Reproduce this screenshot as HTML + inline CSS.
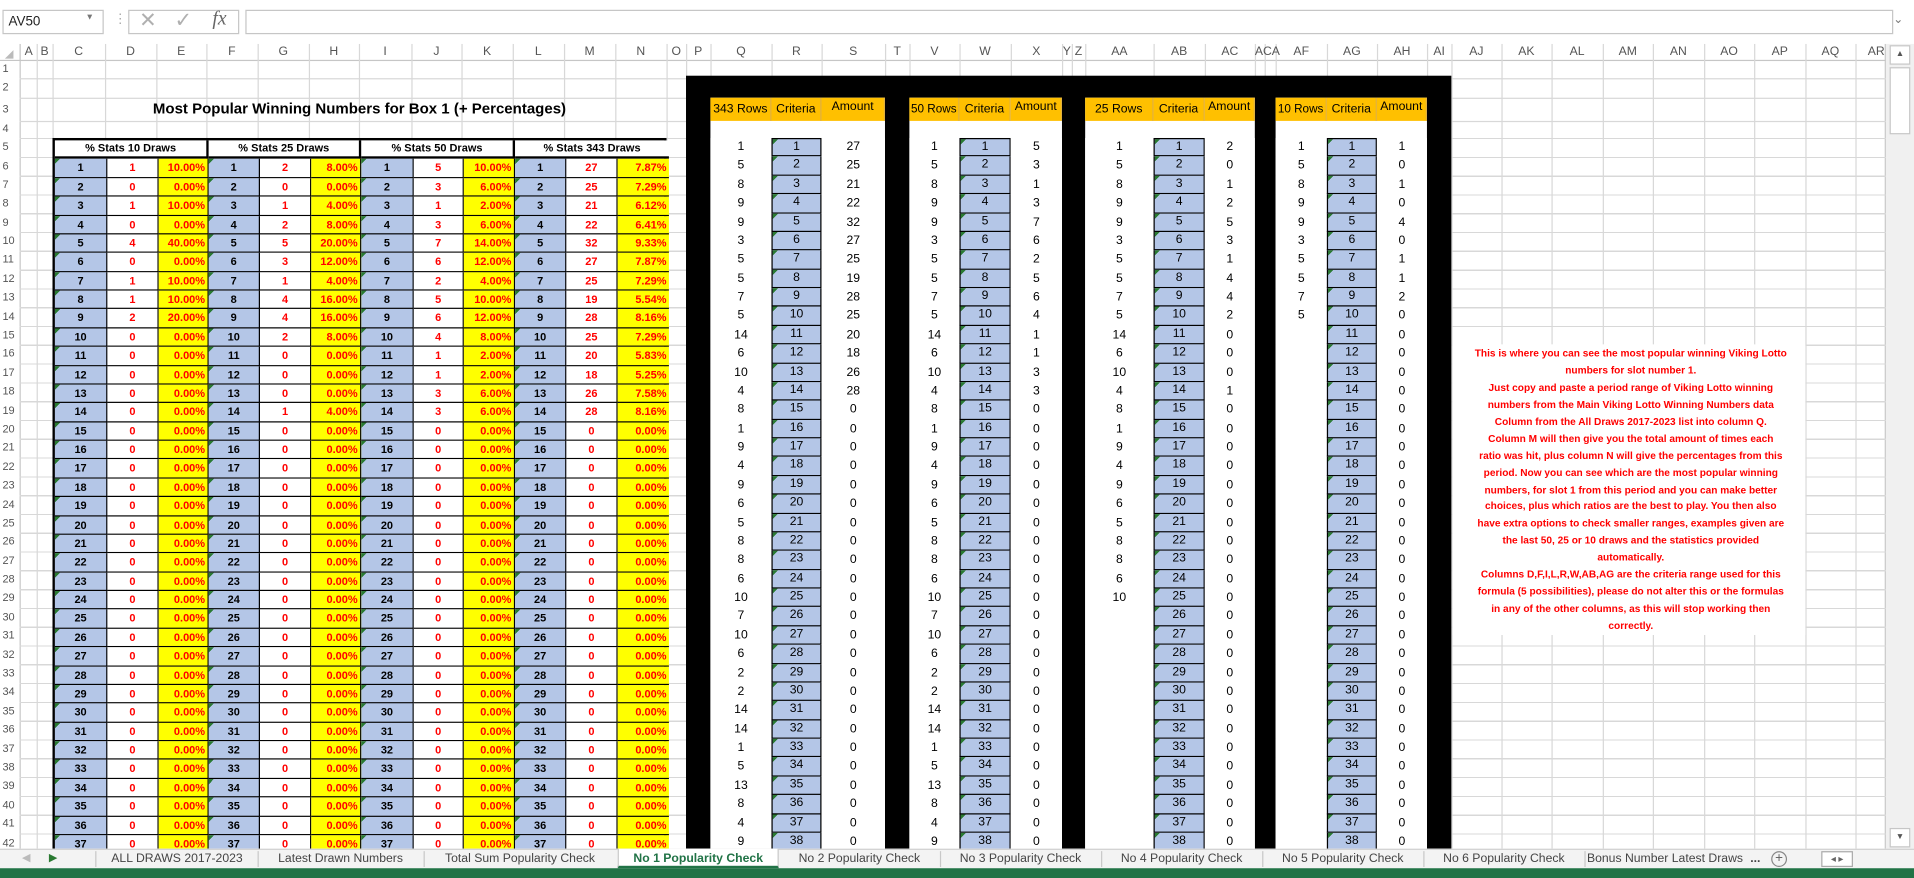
<!DOCTYPE html>
<html><head><meta charset="utf-8"><style>
*{margin:0;padding:0;box-sizing:border-box}
html,body{width:1914px;height:878px;overflow:hidden;background:#fff}
#w{position:absolute;left:0;top:0;width:1568px;height:719px;transform:scale(1.22066,1.22114);transform-origin:0 0;font-family:"Liberation Sans",Arial,sans-serif;background:#fff}
.a{position:absolute}
.vl{position:absolute;top:36px;height:659px;width:1px;background:#d8d8d8}
.ch{position:absolute;top:36px;height:14px;font-size:10px;color:#555;text-align:center;line-height:14px}
.rh{position:absolute;left:0;width:14px;font-size:9px;color:#555;text-align:left;padding-left:2px}
table{display:block;position:absolute}
tbody{display:grid;grid-auto-rows:15.39px}
tr{display:contents}
td{display:block;overflow:hidden;white-space:nowrap;text-align:center}
#lt{left:43px;top:113.1px;font-size:9px;font-weight:bold}
#lt tbody{grid-template-columns:43px 42px 41px 42px 42px 41px 43px 41px 42px 42px 42px 42px;border-left:2px solid #000;border-right:2px solid #000;border-top:2px solid #000;width:503px;margin-left:0}
#lt td{border-right:1px solid #000;border-bottom:1px solid #000;line-height:14px}
#lt td:nth-child(3n+1){background:#b4c6e7 linear-gradient(135deg,#2a7a32 3px,transparent 3px);color:#000}
#lt td:nth-child(3n+2){color:#f00;background:#fff}
#lt td:nth-child(3n){background:#ff0;color:#f00;text-align:right;padding-right:2px}
#lt td:nth-child(12){border-right:none}
#lt tr.h td{background:#fff;color:#000;text-align:center;grid-column:span 3;border-bottom:2px solid #000;border-right:2px solid #000;line-height:12px;padding:0}
#lt tr.h td:last-child{border-right:none}
.rt{top:113.1px;font-size:10px}
.rt td{line-height:15px;background:#fff}
.rt td:nth-child(2){background:#b4c6e7 linear-gradient(135deg,#2a7a32 3px,transparent 3px);border:1px solid #000;border-top:none;line-height:14px}
.rt tr:first-child td:nth-child(2){border-top:1px solid #000}
.oh{position:absolute;top:79.5px;height:19.5px;background:#ffc000;font-size:10px;line-height:19px;text-align:center;white-space:nowrap;border-right:1px solid #e0b040}
.tab{position:absolute;top:696px;height:15px;font-size:10px;color:#444;line-height:15px;white-space:nowrap;transform:translateX(-50%)}
.sep{position:absolute;top:697px;height:13px;width:1px;background:#c8c8c8}
</style></head><body><div id="w">
<div class="a" style="left:0;top:0;width:1568px;height:36px;background:#fff"></div>
<div class="a" style="left:2px;top:8px;width:83px;height:20px;border:1px solid #c6c6c6;font-size:11px;line-height:18px;padding-left:4px;color:#222">AV50</div>
<div class="a" style="left:70px;top:11px;font-size:7px;color:#777">▼</div>
<div class="a" style="left:93px;top:9px;font-size:11px;color:#aaa">⋮</div>
<div class="a" style="left:105px;top:8px;width:91px;height:20px;border:1px solid #c6c6c6"></div>
<div class="a" style="left:114px;top:7px;font-size:17px;color:#b0b0b0">✕</div>
<div class="a" style="left:143px;top:7px;font-size:17px;color:#b0b0b0">✓</div>
<div class="a" style="left:174px;top:7px;font-size:16px;font-style:italic;font-family:'Liberation Serif',serif;color:#666">fx</div>
<div class="a" style="left:201px;top:8px;width:1350px;height:20px;border:1px solid #c6c6c6"></div>
<div class="a" style="left:1551px;top:11px;font-size:10px;color:#777">⌄</div>
<div class="a" style="left:0;top:36px;width:1545px;height:14px;border-bottom:1px solid #c6c6c6;background:#fff"></div>
<div class="a" style="left:4px;top:41px;width:0;height:0;border-left:7px solid transparent;border-bottom:7px solid #bbb"></div>
<div class="a" style="left:16px;top:36px;width:1px;height:659px;background:#c6c6c6"></div>
<div class="vl" style="left:30px"></div><div class="vl" style="left:43px"></div><div class="vl" style="left:86px"></div><div class="vl" style="left:128px"></div><div class="vl" style="left:169px"></div><div class="vl" style="left:211px"></div><div class="vl" style="left:253px"></div><div class="vl" style="left:294px"></div><div class="vl" style="left:337px"></div><div class="vl" style="left:378px"></div><div class="vl" style="left:420px"></div><div class="vl" style="left:462px"></div><div class="vl" style="left:504px"></div><div class="vl" style="left:546px"></div><div class="vl" style="left:562px"></div><div class="vl" style="left:582px"></div><div class="vl" style="left:632px"></div><div class="vl" style="left:673px"></div><div class="vl" style="left:725px"></div><div class="vl" style="left:745px"></div><div class="vl" style="left:786px"></div><div class="vl" style="left:828px"></div><div class="vl" style="left:870px"></div><div class="vl" style="left:878px"></div><div class="vl" style="left:889px"></div><div class="vl" style="left:945px"></div><div class="vl" style="left:987px"></div><div class="vl" style="left:1028px"></div><div class="vl" style="left:1036px"></div><div class="vl" style="left:1045px"></div><div class="vl" style="left:1087px"></div><div class="vl" style="left:1128px"></div><div class="vl" style="left:1169px"></div><div class="vl" style="left:1189px"></div><div class="vl" style="left:1230px"></div><div class="vl" style="left:1271px"></div><div class="vl" style="left:1313px"></div><div class="vl" style="left:1354px"></div><div class="vl" style="left:1396px"></div><div class="vl" style="left:1437px"></div><div class="vl" style="left:1479px"></div><div class="vl" style="left:1520px"></div><div class="vl" style="left:1544px;background:#c6c6c6"></div>
<div class="a" style="left:0;top:64px;width:1545px;height:1px;background:#d8d8d8"></div>
<div class="a" style="left:0;top:79.5px;width:1545px;height:1px;background:#d8d8d8"></div>
<div class="a" style="left:0;top:99px;width:1545px;height:1px;background:#d8d8d8"></div>
<div class="a" style="left:0;top:113.1px;width:1545px;height:582px;background:repeating-linear-gradient(to bottom,#d8d8d8 0,#d8d8d8 1px,transparent 1px,transparent 15.39px)"></div>
<div class="a" style="left:0;top:50px;width:16px;height:645px;background:#fff"></div>
<div class="ch" style="left:17px;width:13px">A</div><div class="ch" style="left:30px;width:13px">B</div><div class="ch" style="left:43px;width:43px">C</div><div class="ch" style="left:86px;width:42px">D</div><div class="ch" style="left:128px;width:41px">E</div><div class="ch" style="left:169px;width:42px">F</div><div class="ch" style="left:211px;width:42px">G</div><div class="ch" style="left:253px;width:41px">H</div><div class="ch" style="left:294px;width:43px">I</div><div class="ch" style="left:337px;width:41px">J</div><div class="ch" style="left:378px;width:42px">K</div><div class="ch" style="left:420px;width:42px">L</div><div class="ch" style="left:462px;width:42px">M</div><div class="ch" style="left:504px;width:42px">N</div><div class="ch" style="left:546px;width:16px">O</div><div class="ch" style="left:562px;width:20px">P</div><div class="ch" style="left:582px;width:50px">Q</div><div class="ch" style="left:632px;width:41px">R</div><div class="ch" style="left:673px;width:52px">S</div><div class="ch" style="left:725px;width:20px">T</div><div class="ch" style="left:745px;width:41px">V</div><div class="ch" style="left:786px;width:42px">W</div><div class="ch" style="left:828px;width:42px">X</div><div class="ch" style="left:870px;width:8px">Y</div><div class="ch" style="left:878px;width:11px">Z</div><div class="ch" style="left:889px;width:56px">AA</div><div class="ch" style="left:945px;width:42px">AB</div><div class="ch" style="left:987px;width:41px">AC</div><div class="ch" style="left:1028px;width:17px">ACA</div><div class="ch" style="left:1045px;width:42px">AF</div><div class="ch" style="left:1087px;width:41px">AG</div><div class="ch" style="left:1128px;width:41px">AH</div><div class="ch" style="left:1169px;width:20px">AI</div><div class="ch" style="left:1189px;width:41px">AJ</div><div class="ch" style="left:1230px;width:41px">AK</div><div class="ch" style="left:1271px;width:42px">AL</div><div class="ch" style="left:1313px;width:41px">AM</div><div class="ch" style="left:1354px;width:42px">AN</div><div class="ch" style="left:1396px;width:41px">AO</div><div class="ch" style="left:1437px;width:42px">AP</div><div class="ch" style="left:1479px;width:41px">AQ</div><div class="ch" style="left:1520px;width:24px;text-align:right">AR</div>
<div class="rh" style="top:51px">1</div><div class="rh" style="top:66px">2</div><div class="rh" style="top:84px">3</div><div class="rh" style="top:100px">4</div><div class="rh" style="top:115px">5</div>
<div class="a" style="left:0;top:128.5px;width:16px;font-size:9px;line-height:15.39px;color:#555;padding-left:2px">6<br>7<br>8<br>9<br>10<br>11<br>12<br>13<br>14<br>15<br>16<br>17<br>18<br>19<br>20<br>21<br>22<br>23<br>24<br>25<br>26<br>27<br>28<br>29<br>30<br>31<br>32<br>33<br>34<br>35<br>36<br>37<br>38<br>39<br>40<br>41<br>42<br>43</div>
<div class="a" style="left:43px;top:82px;width:503px;text-align:center;font-size:12.3px;font-weight:bold;color:#000;white-space:nowrap">Most Popular Winning Numbers for Box 1 (+ Percentages)</div>
<div class="a" style="left:562px;top:62px;width:627px;height:633px;background:#000"></div>
<div class="a" style="left:582px;top:79.5px;width:143px;height:616px;background:#fff"></div>
<div class="a" style="left:745px;top:79.5px;width:125px;height:616px;background:#fff"></div>
<div class="a" style="left:889px;top:79.5px;width:139px;height:616px;background:#fff"></div>
<div class="a" style="left:1045px;top:79.5px;width:124px;height:616px;background:#fff"></div>
<div class="oh" style="left:582px;width:50px">343 Rows</div><div class="oh" style="left:632px;width:41px">Criteria</div><div class="oh" style="left:673px;width:52px;line-height:15px">Amount</div>
<div class="oh" style="left:745px;width:41px;font-size:9.6px">50 Rows</div><div class="oh" style="left:786px;width:42px">Criteria</div><div class="oh" style="left:828px;width:42px;line-height:15px">Amount</div>
<div class="oh" style="left:889px;width:56px">25 Rows</div><div class="oh" style="left:945px;width:42px">Criteria</div><div class="oh" style="left:987px;width:41px;line-height:15px">Amount</div>
<div class="oh" style="left:1045px;width:42px;font-size:9.6px">10 Rows</div><div class="oh" style="left:1087px;width:41px">Criteria</div><div class="oh" style="left:1128px;width:41px;line-height:15px">Amount</div>
<div class="a" style="left:0;top:0;width:1568px;height:695px;overflow:hidden">
<table class="rt" style="left:582px"><tbody style="grid-template-columns:50px 41px 52px">
<tr><td>1<td>1<td>27<tr><td>5<td>2<td>25<tr><td>8<td>3<td>21<tr><td>9<td>4<td>22<tr><td>9<td>5<td>32<tr><td>3<td>6<td>27<tr><td>5<td>7<td>25<tr><td>5<td>8<td>19<tr><td>7<td>9<td>28<tr><td>5<td>10<td>25<tr><td>14<td>11<td>20<tr><td>6<td>12<td>18<tr><td>10<td>13<td>26<tr><td>4<td>14<td>28<tr><td>8<td>15<td>0<tr><td>1<td>16<td>0<tr><td>9<td>17<td>0<tr><td>4<td>18<td>0<tr><td>9<td>19<td>0<tr><td>6<td>20<td>0<tr><td>5<td>21<td>0<tr><td>8<td>22<td>0<tr><td>8<td>23<td>0<tr><td>6<td>24<td>0<tr><td>10<td>25<td>0<tr><td>7<td>26<td>0<tr><td>10<td>27<td>0<tr><td>6<td>28<td>0<tr><td>2<td>29<td>0<tr><td>2<td>30<td>0<tr><td>14<td>31<td>0<tr><td>14<td>32<td>0<tr><td>1<td>33<td>0<tr><td>5<td>34<td>0<tr><td>13<td>35<td>0<tr><td>8<td>36<td>0<tr><td>4<td>37<td>0<tr><td>9<td>38<td>0<tr><td>12<td>39<td>0</tbody></table>
<table class="rt" style="left:745px"><tbody style="grid-template-columns:41px 42px 42px">
<tr><td>1<td>1<td>5<tr><td>5<td>2<td>3<tr><td>8<td>3<td>1<tr><td>9<td>4<td>3<tr><td>9<td>5<td>7<tr><td>3<td>6<td>6<tr><td>5<td>7<td>2<tr><td>5<td>8<td>5<tr><td>7<td>9<td>6<tr><td>5<td>10<td>4<tr><td>14<td>11<td>1<tr><td>6<td>12<td>1<tr><td>10<td>13<td>3<tr><td>4<td>14<td>3<tr><td>8<td>15<td>0<tr><td>1<td>16<td>0<tr><td>9<td>17<td>0<tr><td>4<td>18<td>0<tr><td>9<td>19<td>0<tr><td>6<td>20<td>0<tr><td>5<td>21<td>0<tr><td>8<td>22<td>0<tr><td>8<td>23<td>0<tr><td>6<td>24<td>0<tr><td>10<td>25<td>0<tr><td>7<td>26<td>0<tr><td>10<td>27<td>0<tr><td>6<td>28<td>0<tr><td>2<td>29<td>0<tr><td>2<td>30<td>0<tr><td>14<td>31<td>0<tr><td>14<td>32<td>0<tr><td>1<td>33<td>0<tr><td>5<td>34<td>0<tr><td>13<td>35<td>0<tr><td>8<td>36<td>0<tr><td>4<td>37<td>0<tr><td>9<td>38<td>0<tr><td>12<td>39<td>0</tbody></table>
<table class="rt" style="left:889px"><tbody style="grid-template-columns:56px 42px 41px">
<tr><td>1<td>1<td>2<tr><td>5<td>2<td>0<tr><td>8<td>3<td>1<tr><td>9<td>4<td>2<tr><td>9<td>5<td>5<tr><td>3<td>6<td>3<tr><td>5<td>7<td>1<tr><td>5<td>8<td>4<tr><td>7<td>9<td>4<tr><td>5<td>10<td>2<tr><td>14<td>11<td>0<tr><td>6<td>12<td>0<tr><td>10<td>13<td>0<tr><td>4<td>14<td>1<tr><td>8<td>15<td>0<tr><td>1<td>16<td>0<tr><td>9<td>17<td>0<tr><td>4<td>18<td>0<tr><td>9<td>19<td>0<tr><td>6<td>20<td>0<tr><td>5<td>21<td>0<tr><td>8<td>22<td>0<tr><td>8<td>23<td>0<tr><td>6<td>24<td>0<tr><td>10<td>25<td>0<tr><td><td>26<td>0<tr><td><td>27<td>0<tr><td><td>28<td>0<tr><td><td>29<td>0<tr><td><td>30<td>0<tr><td><td>31<td>0<tr><td><td>32<td>0<tr><td><td>33<td>0<tr><td><td>34<td>0<tr><td><td>35<td>0<tr><td><td>36<td>0<tr><td><td>37<td>0<tr><td><td>38<td>0<tr><td><td>39<td>0</tbody></table>
<table class="rt" style="left:1045px"><tbody style="grid-template-columns:42px 41px 41px">
<tr><td>1<td>1<td>1<tr><td>5<td>2<td>0<tr><td>8<td>3<td>1<tr><td>9<td>4<td>0<tr><td>9<td>5<td>4<tr><td>3<td>6<td>0<tr><td>5<td>7<td>1<tr><td>5<td>8<td>1<tr><td>7<td>9<td>2<tr><td>5<td>10<td>0<tr><td><td>11<td>0<tr><td><td>12<td>0<tr><td><td>13<td>0<tr><td><td>14<td>0<tr><td><td>15<td>0<tr><td><td>16<td>0<tr><td><td>17<td>0<tr><td><td>18<td>0<tr><td><td>19<td>0<tr><td><td>20<td>0<tr><td><td>21<td>0<tr><td><td>22<td>0<tr><td><td>23<td>0<tr><td><td>24<td>0<tr><td><td>25<td>0<tr><td><td>26<td>0<tr><td><td>27<td>0<tr><td><td>28<td>0<tr><td><td>29<td>0<tr><td><td>30<td>0<tr><td><td>31<td>0<tr><td><td>32<td>0<tr><td><td>33<td>0<tr><td><td>34<td>0<tr><td><td>35<td>0<tr><td><td>36<td>0<tr><td><td>37<td>0<tr><td><td>38<td>0<tr><td><td>39<td>0</tbody></table>
<table id="lt"><tbody>
<tr class="h"><td>% Stats 10 Draws<td>% Stats 25 Draws<td>% Stats 50 Draws<td>% Stats 343 Draws
<tr><td>1<td>1<td>10.00%<td>1<td>2<td>8.00%<td>1<td>5<td>10.00%<td>1<td>27<td>7.87%
<tr><td>2<td>0<td>0.00%<td>2<td>0<td>0.00%<td>2<td>3<td>6.00%<td>2<td>25<td>7.29%
<tr><td>3<td>1<td>10.00%<td>3<td>1<td>4.00%<td>3<td>1<td>2.00%<td>3<td>21<td>6.12%
<tr><td>4<td>0<td>0.00%<td>4<td>2<td>8.00%<td>4<td>3<td>6.00%<td>4<td>22<td>6.41%
<tr><td>5<td>4<td>40.00%<td>5<td>5<td>20.00%<td>5<td>7<td>14.00%<td>5<td>32<td>9.33%
<tr><td>6<td>0<td>0.00%<td>6<td>3<td>12.00%<td>6<td>6<td>12.00%<td>6<td>27<td>7.87%
<tr><td>7<td>1<td>10.00%<td>7<td>1<td>4.00%<td>7<td>2<td>4.00%<td>7<td>25<td>7.29%
<tr><td>8<td>1<td>10.00%<td>8<td>4<td>16.00%<td>8<td>5<td>10.00%<td>8<td>19<td>5.54%
<tr><td>9<td>2<td>20.00%<td>9<td>4<td>16.00%<td>9<td>6<td>12.00%<td>9<td>28<td>8.16%
<tr><td>10<td>0<td>0.00%<td>10<td>2<td>8.00%<td>10<td>4<td>8.00%<td>10<td>25<td>7.29%
<tr><td>11<td>0<td>0.00%<td>11<td>0<td>0.00%<td>11<td>1<td>2.00%<td>11<td>20<td>5.83%
<tr><td>12<td>0<td>0.00%<td>12<td>0<td>0.00%<td>12<td>1<td>2.00%<td>12<td>18<td>5.25%
<tr><td>13<td>0<td>0.00%<td>13<td>0<td>0.00%<td>13<td>3<td>6.00%<td>13<td>26<td>7.58%
<tr><td>14<td>0<td>0.00%<td>14<td>1<td>4.00%<td>14<td>3<td>6.00%<td>14<td>28<td>8.16%
<tr><td>15<td>0<td>0.00%<td>15<td>0<td>0.00%<td>15<td>0<td>0.00%<td>15<td>0<td>0.00%
<tr><td>16<td>0<td>0.00%<td>16<td>0<td>0.00%<td>16<td>0<td>0.00%<td>16<td>0<td>0.00%
<tr><td>17<td>0<td>0.00%<td>17<td>0<td>0.00%<td>17<td>0<td>0.00%<td>17<td>0<td>0.00%
<tr><td>18<td>0<td>0.00%<td>18<td>0<td>0.00%<td>18<td>0<td>0.00%<td>18<td>0<td>0.00%
<tr><td>19<td>0<td>0.00%<td>19<td>0<td>0.00%<td>19<td>0<td>0.00%<td>19<td>0<td>0.00%
<tr><td>20<td>0<td>0.00%<td>20<td>0<td>0.00%<td>20<td>0<td>0.00%<td>20<td>0<td>0.00%
<tr><td>21<td>0<td>0.00%<td>21<td>0<td>0.00%<td>21<td>0<td>0.00%<td>21<td>0<td>0.00%
<tr><td>22<td>0<td>0.00%<td>22<td>0<td>0.00%<td>22<td>0<td>0.00%<td>22<td>0<td>0.00%
<tr><td>23<td>0<td>0.00%<td>23<td>0<td>0.00%<td>23<td>0<td>0.00%<td>23<td>0<td>0.00%
<tr><td>24<td>0<td>0.00%<td>24<td>0<td>0.00%<td>24<td>0<td>0.00%<td>24<td>0<td>0.00%
<tr><td>25<td>0<td>0.00%<td>25<td>0<td>0.00%<td>25<td>0<td>0.00%<td>25<td>0<td>0.00%
<tr><td>26<td>0<td>0.00%<td>26<td>0<td>0.00%<td>26<td>0<td>0.00%<td>26<td>0<td>0.00%
<tr><td>27<td>0<td>0.00%<td>27<td>0<td>0.00%<td>27<td>0<td>0.00%<td>27<td>0<td>0.00%
<tr><td>28<td>0<td>0.00%<td>28<td>0<td>0.00%<td>28<td>0<td>0.00%<td>28<td>0<td>0.00%
<tr><td>29<td>0<td>0.00%<td>29<td>0<td>0.00%<td>29<td>0<td>0.00%<td>29<td>0<td>0.00%
<tr><td>30<td>0<td>0.00%<td>30<td>0<td>0.00%<td>30<td>0<td>0.00%<td>30<td>0<td>0.00%
<tr><td>31<td>0<td>0.00%<td>31<td>0<td>0.00%<td>31<td>0<td>0.00%<td>31<td>0<td>0.00%
<tr><td>32<td>0<td>0.00%<td>32<td>0<td>0.00%<td>32<td>0<td>0.00%<td>32<td>0<td>0.00%
<tr><td>33<td>0<td>0.00%<td>33<td>0<td>0.00%<td>33<td>0<td>0.00%<td>33<td>0<td>0.00%
<tr><td>34<td>0<td>0.00%<td>34<td>0<td>0.00%<td>34<td>0<td>0.00%<td>34<td>0<td>0.00%
<tr><td>35<td>0<td>0.00%<td>35<td>0<td>0.00%<td>35<td>0<td>0.00%<td>35<td>0<td>0.00%
<tr><td>36<td>0<td>0.00%<td>36<td>0<td>0.00%<td>36<td>0<td>0.00%<td>36<td>0<td>0.00%
<tr><td>37<td>0<td>0.00%<td>37<td>0<td>0.00%<td>37<td>0<td>0.00%<td>37<td>0<td>0.00%
<tr><td>38<td>0<td>0.00%<td>38<td>0<td>0.00%<td>38<td>0<td>0.00%<td>38<td>0<td>0.00%
</tbody></table>
</div>
<div class="a" style="left:1190px;top:282px;width:289px;height:238px;background:#fff"></div>
<div class="a" style="left:1190px;top:283px;width:292px;text-align:center;color:#f00;font-weight:bold;font-size:8.3px;line-height:13.93px;white-space:nowrap">This is where you can see the most popular winning Viking Lotto<br>numbers for slot number 1.<br>Just copy and paste a period range of Viking Lotto winning<br>numbers from the Main Viking Lotto Winning Numbers data<br>Column from the All Draws 2017-2023 list into column Q.<br>Column M will then give you the total amount of times each<br>ratio was hit, plus column N will give the percentages from this<br>period. Now you can see which are the most popular winning<br>numbers, for slot 1 from this period and you can make better<br>choices, plus which ratios are the best to play. You then also<br>have extra options to check smaller ranges, examples given are<br>the last 50, 25 or 10 draws and the statistics provided<br>automatically.<br>Columns D,F,I,L,R,W,AB,AG are the criteria range used for this<br>formula (5 possibilities), please do not alter this or the formulas<br>in any of the other columns, as this will stop working then<br>correctly.</div>
<div class="a" style="left:1545px;top:36px;width:23px;height:659px;background:#f0f0f0"></div>
<div class="a" style="left:1548px;top:37px;width:17px;height:16px;border:1px solid #c6c6c6;background:#fff;font-size:7px;text-align:center;line-height:14px;color:#555">▲</div>
<div class="a" style="left:1548px;top:55px;width:17px;height:55px;border:1px solid #c6c6c6;background:#fff"></div>
<div class="a" style="left:1548px;top:678px;width:17px;height:16px;border:1px solid #c6c6c6;background:#fff;font-size:7px;text-align:center;line-height:14px;color:#555">▼</div>
<div class="a" style="left:0;top:695px;width:1568px;height:16px;background:#f3f3f3;border-top:1px solid #d0d0d0"></div>
<div class="a" style="left:18px;top:697px;font-size:9px;color:#bbb">◀</div>
<div class="a" style="left:40px;top:697px;font-size:9px;color:#2a7a32">▶</div>
<div class="sep" style="left:78px"></div><div class="sep" style="left:211px"></div><div class="sep" style="left:347px"></div><div class="sep" style="left:770px"></div><div class="sep" style="left:902px"></div><div class="sep" style="left:1034px"></div><div class="sep" style="left:1166px"></div><div class="sep" style="left:1298px"></div>
<div class="a" style="left:506px;top:695px;width:132px;height:16px;background:#fff;border-bottom:2px solid #217346;border-left:1px solid #c8c8c8;border-right:1px solid #c8c8c8"></div>
<div class="tab" style="left:145px">ALL DRAWS 2017-2023</div>
<div class="tab" style="left:279px">Latest Drawn Numbers</div>
<div class="tab" style="left:426px">Total Sum Popularity Check</div>
<div class="tab" style="left:572px;color:#217346;font-weight:bold">No 1 Popularity Check</div>
<div class="tab" style="left:704px">No 2 Popularity Check</div>
<div class="tab" style="left:836px">No 3 Popularity Check</div>
<div class="tab" style="left:968px">No 4 Popularity Check</div>
<div class="tab" style="left:1100px">No 5 Popularity Check</div>
<div class="tab" style="left:1232px">No 6 Popularity Check</div>
<div class="tab" style="left:1364px">Bonus Number Latest Draws</div>
<div class="tab" style="left:1438px;font-weight:bold">...</div>
<div class="a" style="left:1451px;top:697px;width:13px;height:13px;border:1px solid #888;border-radius:50%;font-size:11px;line-height:11px;text-align:center;color:#666">+</div>
<div class="a" style="left:1492px;top:697px;width:26px;height:13px;border:1px solid #aaa;background:#fff;font-size:8px;line-height:11px;color:#666;text-align:center">◂ ▸</div>
<div class="a" style="left:0;top:711px;width:1568px;height:8px;background:#217346"></div>
</div></body></html>
